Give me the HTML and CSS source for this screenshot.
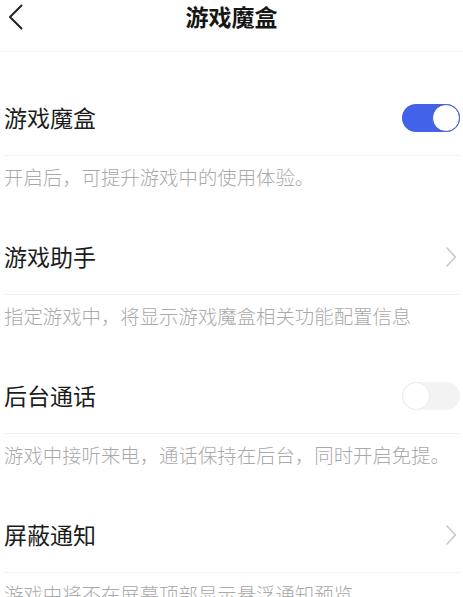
FILE: index.html
```html
<!DOCTYPE html>
<html lang="zh-CN">
<head>
<meta charset="utf-8">
<link rel="stylesheet" href="styles.css">
</head>
<body>
<header class="topbar">
  <svg class="back" width="16" height="26" viewBox="0 0 16 26"><polyline points="13.5,1.5 2,13 13.5,24.5" fill="none" stroke="#222" stroke-width="2" stroke-linecap="round" stroke-linejoin="round"/></svg>
  <h1 class="title">游戏魔盒</h1>
</header>
<main class="list">
  <section class="block">
    <div class="row">
      <span class="label">游戏魔盒</span>
      <span class="switch on"><span class="knob"></span></span>
    </div>
    <p class="desc">开启后，可提升游戏中的使用体验。</p>
  </section>
  <section class="block">
    <div class="row">
      <span class="label">游戏助手</span>
      <svg class="chev" width="12" height="20" viewBox="0 0 12 20"><polyline points="2,1 10.5,10 2,19" fill="none" stroke="#c9c9c9" stroke-width="1.6" stroke-linecap="round" stroke-linejoin="round"/></svg>
    </div>
    <p class="desc">指定游戏中，将显示游戏魔盒相关功能配置信息</p>
  </section>
  <section class="block">
    <div class="row">
      <span class="label">后台通话</span>
      <span class="switch off"><span class="knob"></span></span>
    </div>
    <p class="desc">游戏中接听来电，通话保持在后台，同时开启免提。</p>
  </section>
  <section class="block">
    <div class="row">
      <span class="label">屏蔽通知</span>
      <svg class="chev" width="12" height="20" viewBox="0 0 12 20"><polyline points="2,1 10.5,10 2,19" fill="none" stroke="#c9c9c9" stroke-width="1.6" stroke-linecap="round" stroke-linejoin="round"/></svg>
    </div>
    <p class="desc">游戏中将不在屏幕顶部显示悬浮通知预览</p>
  </section>
</main>
</body>
</html>
```
FILE: styles.css
```css
html, body {
  margin: 0;
  padding: 0;
  background: #ffffff;
  font-family: "Noto Sans CJK SC", "Noto Sans", sans-serif;
  overflow: hidden;
}
.topbar {
  height: 51px;
  border-bottom: 1px solid #f3f3f3;
  display: flex;
  align-items: center;
  justify-content: center;
  position: relative;
}
.back {
  position: absolute;
  left: 8px;
  top: 4px;
}
.title {
  margin: 0;
  font-size: 23px;
  font-weight: 700;
  color: #161616;
  line-height: 1;
  transform: translateY(-9px);
}
.list {
  padding: 6px 3px 0 4px;
}
.block {
  padding-top: 22px;
}
.row {
  height: 75px;
  border-bottom: 1px solid #f2f2f2;
  display: flex;
  align-items: center;
  justify-content: space-between;
}
.label {
  font-size: 23px;
  color: #1c1c1c;
  line-height: 1;
}
.desc {
  margin: 0;
  height: 41px;
  display: flex;
  align-items: center;
  font-size: 19.4px;
  font-weight: 300;
  color: #a9a9a9;
  white-space: nowrap;
}
.switch {
  width: 58px;
  height: 28px;
  border-radius: 14px;
  display: flex;
  align-items: center;
  box-sizing: border-box;
}
.switch.on {
  background: #4263e9;
  justify-content: flex-end;
}
.switch.off {
  background: #f3f3f3;
  justify-content: flex-start;
}
.knob {
  width: 28px;
  height: 28px;
  border-radius: 50%;
  background: #ffffff;
  box-sizing: border-box;
}
.switch.on .knob {
  border: 1.5px solid #4a5bbf;
}
.switch.off .knob {
  border: 1px solid #ececec;
}
.chev {
  margin-right: 3px;
}
```
